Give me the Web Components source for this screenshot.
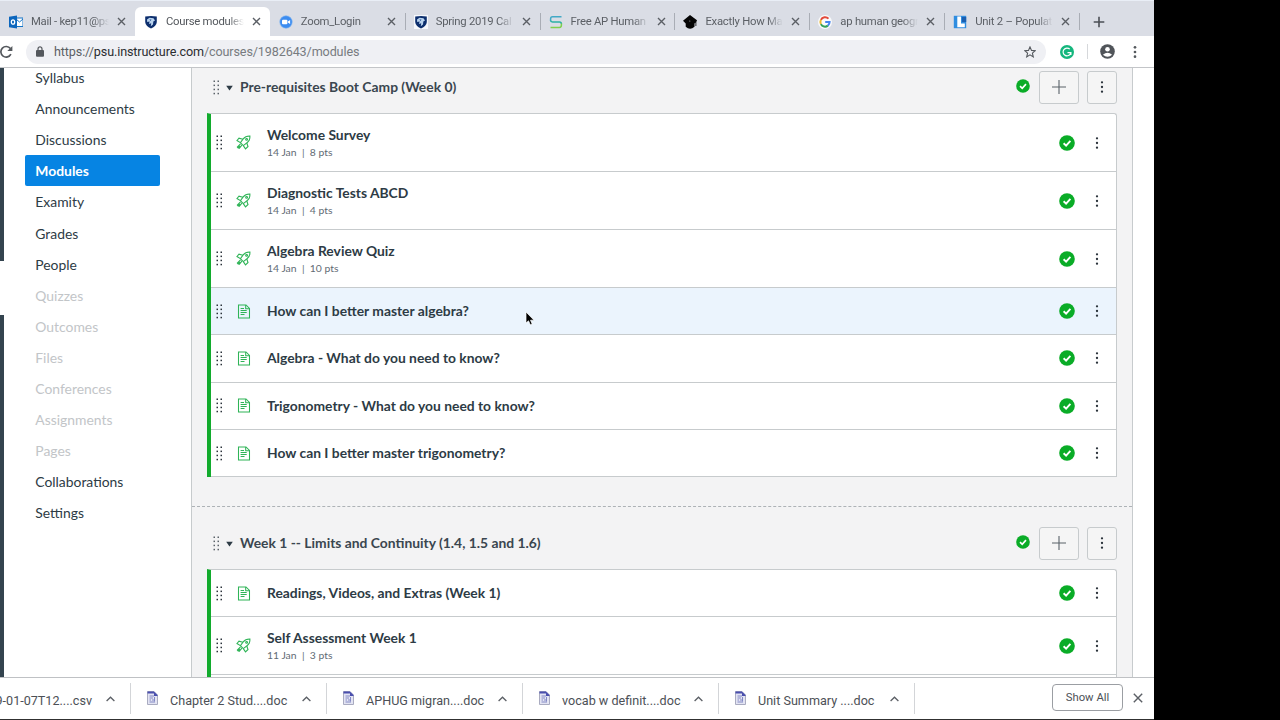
<!DOCTYPE html>
<html lang="en">
<head>
<meta charset="utf-8">
<title>Course modules</title>
<style>
  body {
    margin: 0;
    background: #000;
    width: 1280px;
    height: 720px;
    overflow: hidden;
  }
</style>
</head>
<body>
<browser-window>
  <tab-strip slot="tabs">
    <browser-tab icon="outlook">Mail - kep11@psu</browser-tab>
    <browser-tab icon="shield" active>Course modules:</browser-tab>
    <browser-tab icon="zoom">Zoom_Login</browser-tab>
    <browser-tab icon="shieldbox" divided>Spring 2019 Cal</browser-tab>
    <browser-tab icon="simple" divided>Free AP Human</browser-tab>
    <browser-tab icon="cap" divided>Exactly How Ma</browser-tab>
    <browser-tab icon="google" divided>ap human geogr</browser-tab>
    <browser-tab icon="learner" divided>Unit 2 – Populat</browser-tab>
  </tab-strip>
  <address-bar slot="toolbar" host="psu.instructure.com" path="/courses/1982643/modules"></address-bar>

  <course-nav slot="page">
    <nav-item>Syllabus</nav-item>
    <nav-item>Announcements</nav-item>
    <nav-item>Discussions</nav-item>
    <nav-item active>Modules</nav-item>
    <nav-item>Examity</nav-item>
    <nav-item>Grades</nav-item>
    <nav-item>People</nav-item>
    <nav-item muted>Quizzes</nav-item>
    <nav-item muted>Outcomes</nav-item>
    <nav-item muted>Files</nav-item>
    <nav-item muted>Conferences</nav-item>
    <nav-item muted>Assignments</nav-item>
    <nav-item muted>Pages</nav-item>
    <nav-item>Collaborations</nav-item>
    <nav-item>Settings</nav-item>
  </course-nav>

  <module-list slot="page">
    <course-module heading="Pre-requisites Boot Camp (Week 0)">
      <module-item type="quiz" details="14 Jan &nbsp;|&nbsp; 8 pts">Welcome Survey</module-item>
      <module-item type="quiz" details="14 Jan &nbsp;|&nbsp; 4 pts">Diagnostic Tests ABCD</module-item>
      <module-item type="quiz" details="14 Jan &nbsp;|&nbsp; 10 pts">Algebra Review Quiz</module-item>
      <module-item type="page" hovered>How can I better master algebra?</module-item>
      <module-item type="page">Algebra - What do you need to know?</module-item>
      <module-item type="page">Trigonometry - What do you need to know?</module-item>
      <module-item type="page">How can I better master trigonometry?</module-item>
    </course-module>
    <course-module heading="Week 1 -- Limits and Continuity (1.4, 1.5 and 1.6)">
      <module-item type="page">Readings, Videos, and Extras (Week 1)</module-item>
      <module-item type="quiz" details="11 Jan &nbsp;|&nbsp; 3 pts">Self Assessment Week 1</module-item>
      <module-item type="page"></module-item>
    </course-module>
  </module-list>

  <download-shelf slot="shelf">
    <download-item first>9-01-07T12....csv</download-item>
    <download-item>Chapter 2 Stud....doc</download-item>
    <download-item>APHUG migran....doc</download-item>
    <download-item>vocab w definit....doc</download-item>
    <download-item>Unit Summary ....doc</download-item>
  </download-shelf>
</browser-window>
<mouse-pointer></mouse-pointer>

<script>
const shieldPath = `
  <path d="M1.2 1.6Q7 .2 12.8 1.6V7Q12.4 11.300 7 13.6Q1.600 11.300 1.200 7Z" fill="#0d2f6e"/>
  <path d="M3 4.500L5.500 2.800 9.500 3.200 11 5.500 9.300 6.400 9 9.500 6.800 11.200 7.200 8.300 5 9 5.600 6.600 3.200 7Z" fill="#b9d3ee"/>
  <path d="M5.400 4.600L7.500 4.400 6.500 6Z" fill="#1d4a8d"/>`;

const favicons = {
  outlook: `
    <rect x="6" y="3" width="8" height="8.500" fill="#fff" stroke="#1373c6" stroke-width="1"/>
    <path d="M7 4l3.500 3L14 4" fill="none" stroke="#1373c6"/>
    <path d="M0 1.800L8 .4v13.200L0 12.200z" fill="#0c66bd"/>
    <ellipse cx="4" cy="7" rx="1.700" ry="2.200" fill="none" stroke="#fff" stroke-width="1.300"/>`,
  shield: shieldPath,
  shieldbox: `<rect width="14" height="14" fill="#f6f8fc"/>${shieldPath}`,
  zoom: `
    <circle cx="7" cy="7" r="6.200" fill="#3c8cf0"/>
    <circle cx="7" cy="7" r="6.200" fill="none" stroke="#79b1f2" stroke-width=".6"/>
    <rect x="3" y="4.800" width="5.400" height="4.400" rx="1" fill="#fff"/>
    <path d="M8.900 6.400l2.200-1.500v4.200L8.900 7.600z" fill="#fff"/>`,
  simple: `
    <path d="M12.500 1.800H3.500Q1.600 1.800 1.600 4V6" fill="none" stroke="#42a9c6" stroke-width="1.500"/>
    <path d="M1.600 5.600Q1.600 7 3.500 7H10.500Q12.400 7 12.400 9" fill="none" stroke="#2bb1a4" stroke-width="1.500"/>
    <path d="M12.400 8.500V10Q12.400 12.400 10.500 12.400H1.500" fill="none" stroke="#7fd04b" stroke-width="1.500"/>`,
  cap: `
    <path d="M7 0L14 5.200 13.300 7v4h-.8V7.500L11.500 8.500v3.200Q7 15.600 2.700 11.700V8.500L0 5.800z" fill="#050505"/>
    <circle cx="6.800" cy="6" r=".6" fill="#aaa"/>`,
  google: `
    <circle cx="7" cy="7" r="7" fill="#f9fafc"/>
    <g fill="none" stroke-width="2">
      <path d="M10.500 3.700A4.600 4.600 0 0 0 2.900 4.900" stroke="#e24a3b"/>
      <path d="M2.900 4.900A4.600 4.600 0 0 0 2.900 9.100" stroke="#efb72c"/>
      <path d="M2.900 9.100A4.600 4.600 0 0 0 9.900 10.600" stroke="#35a35b"/>
      <path d="M9.900 10.600A4.600 4.600 0 0 0 11.600 7.100H7.200" stroke="#4485ef"/>
    </g>`,
  learner: `
    <rect x=".8" y=".8" width="12.400" height="12.400" fill="#2f8de0"/>
    <rect x="9" y="2" width="4.200" height="5" fill="#1c5fb0"/>
    <path d="M4.300 1.500H8V8.500H11.800V12.200H4.300Z" fill="#fff"/>`
};

const typeIcons = {
  quiz: `
    <svg width="15" height="15" viewBox="0 0 15 15" fill="none" stroke="#2fb457" stroke-width="1.100">
      <path d="M13.900 1Q9.500 .8 7.200 3.900L4.400 7.600 7.300 10.600 11 7.800Q14.200 5.400 13.900 1z"/>
      <path d="M6.900 4.200L3 3.200 1 5.500 4.400 7.600M10.800 8L12 11.500 9.500 13.800 7.300 10.600"/>
      <path d="M4.500 8.800L1 12.500M5.900 10.200L3 13.700M4 11.100L1.800 13.400"/>
      <circle cx="10.600" cy="4.400" r=".9"/>
    </svg>`,
  page: `
    <svg width="14" height="15" viewBox="0 0 14 15" fill="none" stroke="#2fb457" stroke-width="1.050">
      <path d="M1.500 .9H9L12.500 4.400V14H1.500Z"/>
      <path d="M8.700 1V4.700H12.400M3.600 4.500H7M3.600 6.500H9.700M3.600 8.500H9.700M3.600 10.500H7.500"/>
    </svg>`
};

const checkIcon = (size) => `
  <svg class="check" width="${size}" height="${size}" viewBox="0 0 16 16">
    <circle cx="8" cy="8" r="7.800" fill="#0aac27"/>
    <path d="M4.600 8.200L7.100 10.600 11.400 5.800" fill="none" stroke="#fff" stroke-width="1.900"/>
  </svg>`;

const kebabIcon = `
  <svg width="4" height="14" viewBox="0 0 4 14" fill="#2b333b">
    <circle cx="2" cy="2.300" r="1.150"/><circle cx="2" cy="7" r="1.150"/><circle cx="2" cy="11.700" r="1.150"/>
  </svg>`;

function dragHandle(color) {
  let dots = '';
  for (let row = 0; row < 4; row++) {
    for (let col = 0; col < 2; col++) {
      dots += `<rect x="${1.5 + col * 4}" y="${0.5 + row * 4.1}" width="1.500" height="1.500"/>`;
    }
  }
  return `<svg width="8" height="15" viewBox="0 0 8 15" fill="${color}">${dots}</svg>`;
}

class BrowserWindow extends HTMLElement {
  constructor() {
    super();
    this.attachShadow({ mode: 'open' });
    this.shadowRoot.innerHTML = `
      <style>
        :host {
          display: flex;
          flex-direction: column;
          width: 1154px;
          height: 720px;
          background: #fff;
          overflow: hidden;
        }
        .page {
          display: flex;
          height: 609px;
          overflow: hidden;
        }
        .edge { height: 1px; background: #303030; }
      </style>
      <slot name="tabs"></slot>
      <slot name="toolbar"></slot>
      <div class="page"><slot name="page"></slot></div>
      <slot name="shelf"></slot>
      <div class="edge"></div>
    `;
  }
}

class TabStrip extends HTMLElement {
  constructor() {
    super();
    this.attachShadow({ mode: 'open' });
    this.shadowRoot.innerHTML = `
      <style>
        :host {
          display: flex;
          height: 29px;
          padding-top: 6px;
          border-top: 1px solid #e9eef6;
          background: #dadde5;
        }
        .end {
          display: flex;
          align-items: center;
          gap: 13px;
        }
        .line { width: 1px; height: 17px; background: #a9adb5; }
      </style>
      <slot></slot>
      <div class="end">
        <div class="line"></div>
        <svg width="12" height="12" viewBox="0 0 12 12"><path d="M6 .7V11.300M.7 6H11.300" stroke="#4b4f55" stroke-width="1.600"/></svg>
      </div>
    `;
  }
}

class BrowserTab extends HTMLElement {
  constructor() {
    super();
    this.attachShadow({ mode: 'open' });
    this.shadowRoot.innerHTML = `
      <style>
        :host {
          display: flex;
          align-items: center;
          box-sizing: border-box;
          width: 134.900px;
          height: 29px;
          padding-left: 9px;
          font: 11.300px Roboto, "Liberation Sans", sans-serif;
          letter-spacing: -.25px;
          color: #5c6066;
        }
        :host([active]) {
          background: #fff;
          border-radius: 6px 6px 0 0;
          color: #53575c;
        }
        :host([divided])::before {
          content: "";
          width: 1px;
          height: 17px;
          flex: none;
          margin: 0 8px 0 -9px;
          background: #a9adb5;
        }
        svg { flex: none; }
        .title {
          flex: none;
          width: 78px;
          margin: 0 8px 0 8px;
          line-height: 20px;
          overflow: hidden;
          white-space: nowrap;
          -webkit-mask-image: linear-gradient(to right, #000 80%, transparent);
          mask-image: linear-gradient(to right, #000 80%, transparent);
        }
      </style>
      <svg width="14" height="14" viewBox="0 0 14 14">${favicons[this.getAttribute('icon')]}</svg>
      <div class="title"><slot></slot></div>
      <svg width="9" height="9" viewBox="0 0 9 9"><path d="M1 1L8 8M8 1L1 8" stroke="#5b5f65" stroke-width="1.400"/></svg>
    `;
  }
}

class AddressBar extends HTMLElement {
  constructor() {
    super();
    this.attachShadow({ mode: 'open' });
    this.shadowRoot.innerHTML = `
      <style>
        :host {
          display: flex;
          align-items: center;
          height: 31px;
          border-bottom: 1px solid #c3c5c8;
          background: #fff;
          font: 12.600px Roboto, "Liberation Sans", sans-serif;
          color: #777b80;
        }
        .box {
          display: flex;
          align-items: center;
          box-sizing: border-box;
          width: 1020px;
          height: 24px;
          margin-left: 12px;
          padding: 0 10px;
          border-radius: 12px;
          background: #eff0f4;
        }
        .url { flex: 1; margin-left: 10px; white-space: nowrap; letter-spacing: -.12px; }
        b { font-weight: 400; color: #2a2d31; }
        i { font-style: normal; color: #5b5f64; }
        .badge { margin-left: 14px; }
        .line { width: 1px; height: 15px; margin: 0 12px 0 13px; background: #d6d8db; }
        .menu { margin-left: 18px; }
      </style>
      <svg width="14" height="14" viewBox="0 0 14 14">
        <path d="M10.900 9.200A5.300 5.300 0 1 1 10.400 3.600" fill="none" stroke="#54585d" stroke-width="1.700"/>
        <path d="M12.400 .9V6H7.300z" fill="#54585d"/>
      </svg>
      <div class="box">
        <svg width="8" height="11" viewBox="0 0 8 11"><rect y="4" width="8" height="6.800" rx="1" fill="#54585d"/><path d="M2 4.500V2.900a2 2 0 0 1 4 0V4.500" fill="none" stroke="#54585d" stroke-width="1.200"/></svg>
        <div class="url"><i>https://</i><b>${this.getAttribute('host')}</b>${this.getAttribute('path')}</div>
        <svg width="12" height="12" viewBox="0 0 12 12"><path d="M6 .9L7.500 4.400 11.300 4.700 8.400 7.200 9.300 10.900 6 8.900 2.700 10.900 3.600 7.200 .7 4.700 4.500 4.400Z" fill="none" stroke="#54585d" stroke-width="1.100"/></svg>
      </div>
      <svg class="badge" width="14" height="14" viewBox="0 0 14 14">
        <circle cx="7" cy="7" r="7" fill="#15b67d"/>
        <path d="M9.800 4.200A3.900 3.900 0 1 0 10.700 8.200M10.900 10V7.600H7.500" fill="none" stroke="#fff" stroke-width="1.200"/>
      </svg>
      <div class="line"></div>
      <svg width="15" height="15" viewBox="0 0 15 15">
        <circle cx="7.500" cy="7.500" r="7.300" fill="#505459"/>
        <circle cx="7.500" cy="5.200" r="2.300" fill="#fff"/>
        <path d="M2.900 10.700Q7.500 6.900 12.100 10.700Q7.500 15 2.900 10.700z" fill="#fff"/>
      </svg>
      <svg class="menu" width="4" height="14" viewBox="0 0 4 14" fill="#54585d"><circle cx="2" cy="2.300" r="1.350"/><circle cx="2" cy="7" r="1.350"/><circle cx="2" cy="11.700" r="1.350"/></svg>
    `;
  }
}

class CourseNav extends HTMLElement {
  constructor() {
    super();
    this.attachShadow({ mode: 'open' });
    this.shadowRoot.innerHTML = `
      <style>
        :host {
          display: flex;
          box-sizing: border-box;
          width: 192px;
          flex: none;
          border-right: 1px solid #c7cbcd;
          background: #fff;
        }
        /* global nav strip, the gap is the selected entry */
        .strip {
          width: 4px;
          background: linear-gradient(#34444f 193px, #fff 193px, #fff 247px, #34444f 247px);
        }
        .items {
          display: flex;
          flex-direction: column;
          width: 135px;
          margin: -5.900px 0 0 21px;
        }
      </style>
      <div class="strip"></div>
      <div class="items"><slot></slot></div>
    `;
  }
}

class NavItem extends HTMLElement {
  constructor() {
    super();
    this.attachShadow({ mode: 'open' });
    this.shadowRoot.innerHTML = `
      <style>
        :host {
          display: block;
          height: 31.080px;
          padding-left: 10.300px;
          border-radius: 2px;
          font: 13.900px/31px Lato, sans-serif;
          color: #2d3b45;
        }
        :host([muted]) { color: #c2c5c8; }
        :host([active]) {
          background: #0684e3;
          color: #fff;
          font-weight: 700;
        }
      </style>
      <slot></slot>
    `;
  }
}

class ModuleList extends HTMLElement {
  constructor() {
    super();
    this.attachShadow({ mode: 'open' });
    this.shadowRoot.innerHTML = `
      <style>
        :host {
          display: block;
          box-sizing: border-box;
          width: 941px;
          flex: none;
          height: 780px;
          border-right: 1px solid #c7cbcd;
          background: #f3f3f4;
        }
      </style>
      <slot></slot>
    `;
  }
}

class CourseModule extends HTMLElement {
  constructor() {
    super();
    this.attachShadow({ mode: 'open' });
    this.shadowRoot.innerHTML = `
      <style>
        :host {
          display: block;
          box-sizing: border-box;
          height: 456px;
          margin-top: -17px;
          padding: 0 15px;
        }
        :host(:first-child) { border-bottom: 1px dashed #adb2b6; }
        :host(:last-child) { margin-top: 0; }
        header {
          display: flex;
          align-items: center;
          height: 32px;
          padding: 20px 0 10px 5px;
        }
        h2 {
          flex: 1;
          margin: 0 0 0 7px;
          padding-bottom: 1px;
          font: 700 13.850px/20px Lato, sans-serif;
          color: #3a464f;
        }
        .caret { margin: 2px 0 0 6px; }
        .check { margin-bottom: 2px; }
        .button {
          display: flex;
          align-items: center;
          justify-content: center;
          box-sizing: border-box;
          height: 33px;
          border: 1px solid #c7cbcd;
          border-radius: 3px;
          background: #f5f5f5;
        }
        .add { width: 40px; margin: 0 8px 0 9px; }
        .more { width: 30px; }
        .list {
          border: 1px solid #c7cbcd;
          border-bottom: 0;
          border-left: 4px solid #12ab2d;
          border-radius: 0 3px 0 0;
          background: #fff;
        }
      </style>
      <header>
        ${dragHandle('#5a6269')}
        <svg class="caret" width="7" height="6" viewBox="0 0 7 6"><path d="M.2 .8H6.800L3.500 5.500z" fill="#2d3b45"/></svg>
        <h2>${this.getAttribute('heading')}</h2>
        ${checkIcon(14)}
        <div class="button add"><svg width="14" height="14" viewBox="0 0 14 14"><path d="M7 0V14M0 7H14" stroke="#5a6269" stroke-width="1.100"/></svg></div>
        <div class="button more">${kebabIcon}</div>
      </header>
      <div class="list"><slot></slot></div>
    `;
  }
}

class ModuleItem extends HTMLElement {
  constructor() {
    super();
    const details = this.getAttribute('details');
    this.attachShadow({ mode: 'open' });
    this.shadowRoot.innerHTML = `
      <style>
        :host {
          display: flex;
          align-items: center;
          box-sizing: border-box;
          height: 47.300px;
          padding: 0 17px 0 4px;
          border-bottom: 1px solid #c7cbcd;
          font-family: Lato, sans-serif;
          color: #2d3b45;
        }
        :host([details]) { height: 58px; }
        :host([hovered]) { background: #ebf4fd; }
        .icon {
          display: flex;
          justify-content: flex-end;
          width: 16px;
          margin: 0 16px 0 12px;
        }
        .text { flex: 1; }
        .title { font-size: 13.850px; font-weight: 700; line-height: 20px; }
        .details {
          padding-bottom: 2px;
          font-size: 10.400px;
          line-height: 14px;
          color: #5f6b74;
        }
        .more { display: flex; margin-left: 20px; }
      </style>
      ${dragHandle('#2b333b')}
      <div class="icon">${typeIcons[this.getAttribute('type')]}</div>
      <div class="text">
        <div class="title"><slot></slot></div>
        ${details ? `<div class="details">${details}</div>` : ''}
      </div>
      ${checkIcon(16)}
      <div class="more">${kebabIcon}</div>
    `;
  }
}

class DownloadShelf extends HTMLElement {
  constructor() {
    super();
    this.attachShadow({ mode: 'open' });
    this.shadowRoot.innerHTML = `
      <style>
        :host {
          display: flex;
          align-items: center;
          box-sizing: border-box;
          height: 42px;
          border-top: 1px solid #bfc1c4;
          background: #fff;
          border-radius: 0 0 6px 0;
        }
        .all {
          box-sizing: border-box;
          width: 71px;
          height: 27px;
          margin: -2px 10px 0 auto;
          border: 1px solid #9b9ea3;
          border-radius: 4px;
          font: 11.300px/25px Roboto, "Liberation Sans", sans-serif;
          text-align: center;
          color: #4c5056;
        }
        .close { margin: -2px 11px 0 0; }
      </style>
      <slot></slot>
      <div class="all">Show All</div>
      <svg class="close" width="10" height="10" viewBox="0 0 10 10"><path d="M.8 .8L9.200 9.200M9.200 .8L.8 9.200" stroke="#5b5f65" stroke-width="1.400"/></svg>
    `;
  }
}

class DownloadItem extends HTMLElement {
  constructor() {
    super();
    this.attachShadow({ mode: 'open' });
    const docIcon = `
      <svg class="doc" width="11" height="14" viewBox="0 0 11 14">
        <path d="M.5 .5H7L10.500 4V13.500H.5Z" fill="#e3e4f3" stroke="#a9abc0"/>
        <path d="M.5 .5H7L10.500 4V5H7V2.500H.5Z" fill="#4a4fae"/>
        <path d="M2.500 5H7M2.500 7H6M2.500 9H4M2.500 11H8M7.500 6V10.500M5 9H7.500" stroke="#8389c4" stroke-width="1"/>
      </svg>`;
    this.shadowRoot.innerHTML = `
      <style>
        :host {
          display: flex;
          align-items: center;
          box-sizing: border-box;
          width: 196px;
          height: 31px;
          flex: none;
          padding: 3px 15px 0 16px;
          border-right: 1px solid #d3d5d8;
          font: 12.600px Roboto, "Liberation Sans", sans-serif;
          color: #4c5056;
        }
        :host([first]) {
          width: 131px;
          justify-content: flex-end;
          padding-left: 0;
          overflow: hidden;
        }
        svg { flex: none; }
        .doc { margin: -5px 12px 0 0; }
        .name { flex: 1; white-space: nowrap; }
        :host([first]) .name { flex: none; margin-right: 14px; }
        .up { margin-top: -3px; }
      </style>
      ${this.hasAttribute('first') ? '' : docIcon}
      <div class="name"><slot></slot></div>
      <svg class="up" width="9" height="6" viewBox="0 0 9 6"><path d="M.6 5L4.500 1.200 8.400 5" fill="none" stroke="#5b5f65" stroke-width="1.300"/></svg>
    `;
  }
}

class MousePointer extends HTMLElement {
  constructor() {
    super();
    this.attachShadow({ mode: 'open' });
    this.shadowRoot.innerHTML = `
      <style>
        :host {
          position: absolute;
          left: 525px;
          top: 311px;
        }
      </style>
      <svg width="10" height="15" viewBox="0 0 10 15"><path d="M1 1V12L3.500 9.800 5.300 13.800 7.200 13 5.500 9.200H9z" fill="#000" stroke="#fff" stroke-width=".7"/></svg>
    `;
  }
}

customElements.define('browser-window', BrowserWindow);
customElements.define('tab-strip', TabStrip);
customElements.define('browser-tab', BrowserTab);
customElements.define('address-bar', AddressBar);
customElements.define('course-nav', CourseNav);
customElements.define('nav-item', NavItem);
customElements.define('module-list', ModuleList);
customElements.define('course-module', CourseModule);
customElements.define('module-item', ModuleItem);
customElements.define('download-shelf', DownloadShelf);
customElements.define('download-item', DownloadItem);
customElements.define('mouse-pointer', MousePointer);
</script>
</body>
</html>
